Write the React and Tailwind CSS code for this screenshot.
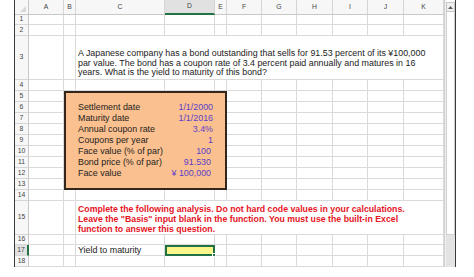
import React from "react";

const COLS = ["A", "B", "C", "D", "E", "F", "G", "H", "I", "J", "K"];
const ROWS = Array.from({ length: 18 }, (_, i) => i + 1);

const boxRows = [
  ["Settlement date", "1/1/2000", ""],
  ["Maturity date", "1/1/2016", ""],
  ["Annual coupon rate", "3.4%", ""],
  ["Coupons per year", "1", ""],
  ["Face value (% of par)", "100", "pr-[2px]"],
  ["Bond price (% of par)", "91.530", "pr-[2px]"],
  ["Face value", "¥  100,000", "pr-[2px]"],
];

function Cell({ className = "", children }) {
  return (
    <div className={"border-r border-b border-[#dadada] bg-white " + className}>
      {children}
    </div>
  );
}

function RowHeader({ n }) {
  const active = n === 17;
  return (
    <div
      className={
        "flex items-center justify-center border-b border-[#d5d5d5] text-[6.8px] text-[#444] " +
        (active
          ? "bg-[#e1e1e1] border-r-2 border-r-[#217346]"
          : "bg-[#f7f7f7] border-r border-r-[#c8c8c8]")
      }
    >
      {n}
    </div>
  );
}

export default function App() {
  const cells = [];

  cells.push(
    <div
      key="corner"
      className="relative border-r border-b border-[#c8c8c8] bg-[#f7f7f7]"
    >
      <svg className="absolute bottom-[2px] right-[2px]" width="6" height="6" viewBox="0 0 6 6">
        <polygon points="6,0 6,6 0,6" fill="#d8d8d8" />
      </svg>
    </div>
  );
  COLS.forEach((c) => {
    const active = c === "D";
    cells.push(
      <div
        key={"h" + c}
        className={
          "flex items-center justify-center border-r border-[#d5d5d5] text-[6.8px] text-[#444] " +
          (active
            ? "bg-[#e1e1e1] border-b-2 border-b-[#217346]"
            : "bg-[#f7f7f7] border-b border-b-[#c8c8c8]")
        }
      >
        {c}
      </div>
    );
  });

  ROWS.forEach((r) => {
    cells.push(<RowHeader key={"rh" + r} n={r} />);
    if (r === 3) {
      cells.push(<Cell key="A3" />);
      cells.push(<Cell key="B3" />);
      cells.push(
        <Cell key="C3" className="col-span-9 flex items-end pb-[2px] pl-[2px]">
          <div className="whitespace-nowrap text-[8.9px] leading-[9.2px] text-[#222]">
            A Japanese company has a bond outstanding that sells for 91.53 percent of its ¥100,000
            <br />
            par value. The bond has a coupon rate of 3.4 percent paid annually and matures in 16
            <br />
            years. What is the yield to maturity of this bond?
          </div>
        </Cell>
      );
      return;
    }
    if (r === 15) {
      cells.push(<Cell key="A15" />);
      cells.push(<Cell key="B15" />);
      cells.push(
        <Cell key="C15" className="col-span-9 flex items-end pb-0 pl-[2px]">
          <div className="whitespace-nowrap text-[8.75px] font-bold leading-[10px] text-[#e5141e]">
            Complete the following analysis. Do not hard code values in your calculations.
            <br />
            Leave the "Basis" input blank in the function. You must use the built-in Excel
            <br />
            function to answer this question.
          </div>
        </Cell>
      );
      return;
    }
    COLS.forEach((c, ci) => {
      if (r >= 5 && r <= 13 && ci >= 1 && ci <= 4) return;
      if (r === 17 && c === "C") {
        cells.push(
          <Cell key={c + r} className="flex items-center pl-[2px]">
            <span className="whitespace-nowrap text-[8.9px] leading-none text-[#222]">
              Yield to maturity
            </span>
          </Cell>
        );
        return;
      }
      if (r === 17 && c === "D") {
        cells.push(
          <div
            key={c + r}
            className="relative border-2 border-[#217346] bg-[#fbf68c]"
          >
            <div className="absolute -bottom-[3px] -right-[3px] h-[4px] w-[4px] border border-white bg-[#217346]"></div>
          </div>
        );
        return;
      }
      cells.push(<Cell key={c + r} />);
    });
  });

  return (
    <div className="h-[277px] w-[474px] bg-white font-['Liberation_Sans',Arial,sans-serif]">
      <div className="flex h-[267px]">
        <div className="w-[14px]"></div>
        <div className="flex h-full border-l border-[#3a3a3a]">
          <div className="relative grid grid-cols-[14px_35px_12px_89px_50px_12px_35px_35px_36px_35px_36px_40px] grid-rows-[15px_10px_11px_44px_repeat(11,11px)_34px_10px_11px_11px]">
            {cells}
            <div className="col-start-3 col-span-4 row-start-6 row-span-9 border-2 border-[#33261c] bg-[#fac08f] pl-[12px] pr-[12px] pt-[9px]">
              <div className="flex flex-col">
                {boxRows.map(([label, value, pad]) => (
                  <div
                    key={label}
                    className="flex h-[11px] items-center justify-between whitespace-nowrap text-[8.9px] leading-none"
                  >
                    <span className="text-[#1e1e1e]">{label}</span>
                    <span className={"text-[#5b3fc9] " + pad}>{value}</span>
                  </div>
                ))}
              </div>
            </div>
          </div>
          <div className="w-[2px] border-l border-[#d0d0d0] bg-[#f0f0f0]"></div>
          <div className="flex w-[10px] flex-col border-r border-[#3a3a3a]">
            <div className="mt-[2px] flex h-[10px] items-center justify-center border border-[#c8c8c8] bg-[#f0f0f0]">
              <svg width="5" height="3" viewBox="0 0 5 3">
                <polygon points="2.5,0 5,3 0,3" fill="#606060" />
              </svg>
            </div>
            <div className="h-[223px] border-x border-b border-[#cfcfcf] bg-white"></div>
            <div className="flex-1 bg-[#e3e3e3]"></div>
          </div>
        </div>
      </div>
    </div>
  );
}
